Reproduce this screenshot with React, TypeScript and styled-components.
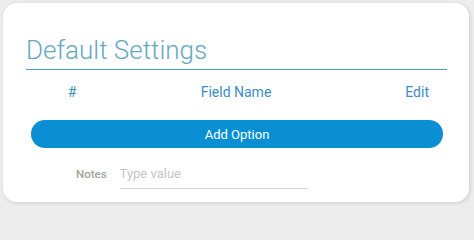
import styled, { createGlobalStyle } from "styled-components";

const GlobalStyle = createGlobalStyle`
  html, body {
    margin: 0;
    padding: 0;
    background: #ededed;
    font-family: Roboto, "Liberation Sans", sans-serif;
  }
`;

const Page = styled.div`
  width: 474px;
  height: 206px;
  padding: 3px 5px 4px 3px;
  box-sizing: border-box;
`;

const Card = styled.div`
  height: 199px;
  box-sizing: border-box;
  background: #fff;
  border-radius: 14px;
  box-shadow: 1px 1px 4px rgba(0, 0, 0, 0.14);
  padding: 32px 22px 0 23px;
  display: flex;
  flex-direction: column;
`;

const Title = styled.h2`
  margin: 0;
  padding-bottom: 4px;
  font-size: 26px;
  line-height: 30px;
  font-weight: 300;
  color: #65a8c2;
  border-bottom: 1px solid #4f9fbd;
`;

const HeaderRow = styled.div`
  display: grid;
  grid-template-columns: 92px 236px 1fr;
  margin-top: 12px;
  font-size: 14px;
  line-height: 20px;
  color: #3b8dc6;
`;

const HeaderCell = styled.div<{ $align?: "left" | "center" | "right" }>`
  text-align: ${(p) => p.$align ?? "center"};
  padding-right: ${(p) => (p.$align === "right" ? "18px" : "0")};
`;

const AddButton = styled.button`
  margin: 18px 4px 0 5px;
  height: 28px;
  border: none;
  border-radius: 14px;
  background: #0a8fd4;
  color: #fff;
  font-family: Roboto, "Liberation Sans", sans-serif;
  font-size: 13px;
  cursor: pointer;
`;

const NotesRow = styled.div`
  display: flex;
  align-items: baseline;
  margin-top: 15px;
  padding-left: 50px;
  gap: 13px;
`;

const NotesLabel = styled.label`
  font-size: 11.5px;
  font-weight: 500;
  color: #a3a3a3;
`;

const NotesInput = styled.input`
  width: 188px;
  height: 26px;
  box-sizing: border-box;
  padding: 0 0 5px;
  border: none;
  border-bottom: 1px solid #d6d6d6;
  outline: none;
  font-family: Roboto, "Liberation Sans", sans-serif;
  font-size: 13px;
  color: #555;
  &::placeholder {
    color: #c4c4c4;
  }
`;

export default function App() {
  return (
    <>
      <GlobalStyle />
      <Page>
        <Card>
          <Title>Default Settings</Title>
          <HeaderRow>
            <HeaderCell>#</HeaderCell>
            <HeaderCell>Field Name</HeaderCell>
            <HeaderCell $align="right">Edit</HeaderCell>
          </HeaderRow>
          <AddButton>Add Option</AddButton>
          <NotesRow>
            <NotesLabel>Notes</NotesLabel>
            <NotesInput placeholder="Type value" />
          </NotesRow>
        </Card>
      </Page>
    </>
  );
}
